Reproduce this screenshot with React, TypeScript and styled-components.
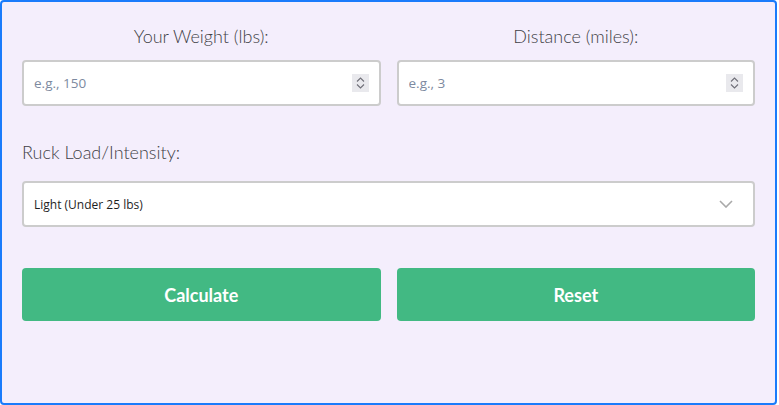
import React from "react";
import styled, { createGlobalStyle } from "styled-components";

const Global = createGlobalStyle`
  html, body { margin: 0; padding: 0; background: #ffffff; }
  * { box-sizing: border-box; }
`;

const Frame = styled.div`
  width: 777px;
  height: 405px;
  border: 2px solid #1a7bfb;
  border-radius: 4px;
  background: #f4eefc;
  padding: 22px 20px 20px;
  font-family: Lato, "Open Sans", sans-serif;
`;

const Row = styled.div`
  display: grid;
  grid-template-columns: 1fr 1fr;
  column-gap: 16px;
`;

const Field = styled.div`
  display: flex;
  flex-direction: column;
`;

const Label = styled.label<{ $center?: boolean }>`
  display: block;
  font-size: 18px;
  font-weight: 300;
  line-height: 24px;
  color: #3f3f46;
  text-align: ${(p) => (p.$center ? "center" : "left")};
  margin-bottom: ${(p) => (p.$center ? "12px" : "17px")};
`;

const InputBox = styled.div`
  height: 46px;
  border: 2px solid #cccccc;
  border-radius: 4px;
  background: #ffffff;
  display: flex;
  align-items: center;
  padding: 0 10px 0 10px;
`;

const Input = styled.input`
  flex: 1;
  min-width: 0;
  border: none;
  outline: none;
  background: transparent;
  font-family: "Open Sans", sans-serif;
  font-size: 13.5px;
  color: #222;
  padding: 0;
  &::placeholder { color: #7d8aa0; }
`;

const Spinner = styled.div`
  width: 17px;
  height: 18px;
  background: #e9e9ed;
  display: flex;
  flex-direction: column;
  align-items: center;
  justify-content: center;
  gap: 2px;
`;

const Section = styled.div`
  margin-top: 34px;
`;

const SelectBox = styled.div`
  height: 46px;
  border: 2px solid #cccccc;
  border-radius: 4px;
  background: #ffffff;
  display: flex;
  align-items: center;
  justify-content: space-between;
  padding: 0 20px 0 10px;
  font-family: "Open Sans", sans-serif;
  font-size: 12px;
  color: #1f1f1f;
`;

const Buttons = styled(Row)`
  margin-top: 41px;
`;

const Button = styled.button`
  height: 53px;
  border: none;
  border-radius: 4px;
  background: #42b983;
  color: #ffffff;
  font-family: Lato, "Open Sans", sans-serif;
  font-size: 18px;
  font-weight: 700;
  cursor: pointer;
`;

const SpinIcon = ({ up }: { up?: boolean }) => (
  <svg width="9" height="5" viewBox="0 0 9 5">
    <path
      d={up ? "M1 4.5 L4.5 1 L8 4.5" : "M1 0.5 L4.5 4 L8 0.5"}
      fill="none"
      stroke="#6f6f78"
      strokeWidth="1.1"
    />
  </svg>
);

const NumberField = ({ label, placeholder }: { label: string; placeholder: string }) => (
  <Field>
    <Label $center>{label}</Label>
    <InputBox>
      <Input placeholder={placeholder} />
      <Spinner>
        <SpinIcon up />
        <SpinIcon />
      </Spinner>
    </InputBox>
  </Field>
);

export default function App() {
  return (
    <>
      <Global />
      <Frame>
        <Row>
          <NumberField label="Your Weight (lbs):" placeholder="e.g., 150" />
          <NumberField label="Distance (miles):" placeholder="e.g., 3" />
        </Row>
        <Section>
          <Label>Ruck Load/Intensity:</Label>
          <SelectBox>
            <span>Light (Under 25 lbs)</span>
            <svg width="14" height="8" viewBox="0 0 14 8">
              <path d="M1 1 L7 7 L13 1" fill="none" stroke="#a9a9a9" strokeWidth="1.6" />
            </svg>
          </SelectBox>
        </Section>
        <Buttons>
          <Button>Calculate</Button>
          <Button>Reset</Button>
        </Buttons>
      </Frame>
    </>
  );
}
